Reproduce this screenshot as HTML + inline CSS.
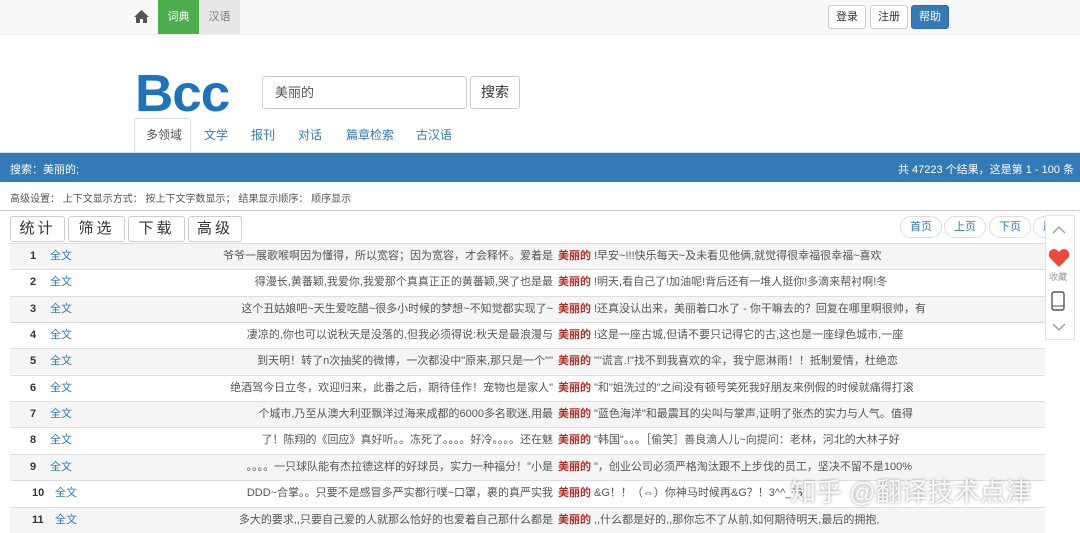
<!DOCTYPE html>
<html><head><meta charset="utf-8"><style>
*{margin:0;padding:0;box-sizing:border-box}
body{width:1080px;height:531px;overflow:hidden;background:#fff;font-family:"Liberation Sans","Noto Sans CJK SC",sans-serif;font-size:12px;color:#333;position:relative}
.a{position:absolute}
.nav{left:0;top:0;width:1080px;height:35px;background:#f8f8f8;border-bottom:1px solid #eee}
.btn{position:absolute;border:1px solid #ccc;border-radius:3px;background:#fff;text-align:center;font-size:11px}
.tab{position:absolute;top:126px;font-size:12px;color:#337ab7}
.bar{left:0;top:153px;width:1080px;height:29px;background:#337ab7;color:#fff;font-size:11px}
.row{position:absolute;left:10px;width:1035px;height:26px;border-top:1px solid #ddd;font-size:11px;line-height:25px}
.row.g{background:#f5f5f5}
.n{position:absolute;left:20px;font-weight:bold;color:#333}
.q{position:absolute;left:40px;color:#337ab7}
.l{position:absolute;right:492px;white-space:nowrap;color:#555}
.k{position:absolute;left:548px;font-weight:bold;color:#b92c28}
.r{position:absolute;left:584px;white-space:nowrap;color:#555}
.pg{position:absolute;top:216px;height:22px;border:1px solid #ddd;border-radius:11px;font-size:11px;color:#337ab7;text-align:center;line-height:20px;background:#fff}
.tb{position:absolute;top:216px;height:26px;border:1px solid #ccc;border-radius:3px;background:#fff;font-size:15px;text-align:center;line-height:24px;letter-spacing:3px;color:#333}
</style></head><body>
<div class="a nav"></div>
<svg class="a" style="left:134px;top:10px" width="15" height="13" viewBox="0 0 15 13"><path d="M7.5 0L0 7h2v6h4V9h3v4h4V7h2z" fill="#555"/></svg>
<div class="a" style="left:158px;top:0;width:41px;height:34px;background:#4cae4c;color:#fff;font-size:11px;line-height:34px;text-align:center">词典</div>
<div class="a" style="left:199px;top:0;width:41px;height:34px;background:#e7e7e7;color:#777;font-size:11px;line-height:34px;text-align:center">汉语</div>
<div class="btn" style="left:828px;top:5px;width:38px;height:24px;line-height:22px">登录</div>
<div class="btn" style="left:870px;top:5px;width:38px;height:24px;line-height:22px">注册</div>
<div class="btn" style="left:911px;top:5px;width:38px;height:24px;line-height:22px;background:#337ab7;border-color:#2e6da4;color:#fff">帮助</div>
<div class="a" style="left:135px;top:68px;font-family:'Liberation Sans',sans-serif;font-weight:bold;font-size:52px;color:#1e73be;line-height:52px;letter-spacing:-1px;transform:scaleX(1.02);transform-origin:left">Bcc</div>
<div class="a" style="left:262px;top:76px;width:205px;height:33px;border:1px solid #ccc;border-radius:3px;font-size:13px;color:#555;line-height:31px;padding-left:12px">美丽的</div>
<div class="a" style="left:470px;top:76px;width:50px;height:33px;border:1px solid #ccc;border-radius:3px;font-size:14px;line-height:31px;text-align:center">搜索</div>
<div class="a" style="left:134px;top:118px;width:57px;height:36px;border:1px solid #ddd;border-bottom:none;border-radius:3px 3px 0 0;background:#fff"></div>
<div class="tab" style="left:146px;color:#555">多领域</div>
<div class="tab" style="left:204px">文学</div>
<div class="tab" style="left:251px">报刊</div>
<div class="tab" style="left:298px">对话</div>
<div class="tab" style="left:346px">篇章检索</div>
<div class="tab" style="left:416px">古汉语</div>
<div class="a" style="left:0;top:152px;width:1080px;border-top:1px solid #ddd"></div>
<div class="a bar"><span class="a" style="left:10px;top:8px">搜索：美丽的;</span><span class="a" style="right:6px;top:8px">共 47223 个结果，这是第 1 - 100 条</span></div>
<div class="a" style="left:10px;top:190px;font-size:10px;color:#555">高级设置：&nbsp;上下文显示方式：&nbsp;按上下文字数显示；&nbsp;结果显示顺序：&nbsp;顺序显示</div>
<div class="a" style="left:0;top:210px;width:1080px;border-top:1px solid #ccc"></div>
<div class="tb" style="left:10px;width:55px">统计</div>
<div class="tb" style="left:68px;width:57px">筛选</div>
<div class="tb" style="left:128px;width:57px">下载</div>
<div class="tb" style="left:188px;width:54px">高级</div>
<div class="pg" style="left:900px;width:42px">首页</div>
<div class="pg" style="left:944px;width:42px">上页</div>
<div class="pg" style="left:989px;width:42px">下页</div>
<div class="pg" style="left:1033px;width:42px">尾页</div>

<div class="row g" style="top:243px"><span class="n">1</span><span class="q">全文</span><span class="l">爷爷一展歌喉啊因为懂得，所以宽容；因为宽容，才会释怀。爱着是</span><span class="k">美丽的</span><span class="r">!早安~!!!快乐每天~及未看见他俩,就觉得很幸福很幸福~喜欢</span></div>
<div class="row" style="top:269px"><span class="n">2</span><span class="q">全文</span><span class="l">得漫长,黄蕃颖,我爱你,我爱那个真真正正的黄蕃颖,哭了也是最</span><span class="k">美丽的</span><span class="r">!明天,看自己了!加油呢!背后还有一堆人挺你!多滴来帮衬啊!冬</span></div>
<div class="row g" style="top:296px"><span class="n">3</span><span class="q">全文</span><span class="l">这个丑姑娘吧~天生爱吃醋~很多小时候的梦想~不知觉都实现了~</span><span class="k">美丽的</span><span class="r">!还真没认出来，美丽着口水了 - 你干嘛去的？回复在哪里啊很帅，有</span></div>
<div class="row" style="top:322px"><span class="n">4</span><span class="q">全文</span><span class="l">凄凉的,你也可以说秋天是没落的,但我必须得说:秋天是最浪漫与</span><span class="k">美丽的</span><span class="r">!这是一座古城,但请不要只记得它的古,这也是一座绿色城市,一座</span></div>
<div class="row g" style="top:348px"><span class="n">5</span><span class="q">全文</span><span class="l">到天明！转了n次抽奖的微博，一次都没中"原来,那只是一个""</span><span class="k">美丽的</span><span class="r">""谎言.!"找不到我喜欢的伞，我宁愿淋雨！！抵制爱情，杜绝恋</span></div>
<div class="row" style="top:375px"><span class="n">6</span><span class="q">全文</span><span class="l">绝酒驾今日立冬，欢迎归来，此番之后，期待佳作！宠物也是家人"</span><span class="k">美丽的</span><span class="r">"和"姐洗过的"之间没有顿号笑死我好朋友来例假的时候就痛得打滚</span></div>
<div class="row g" style="top:401px"><span class="n">7</span><span class="q">全文</span><span class="l">个城市,乃至从澳大利亚飘洋过海来成都的6000多名歌迷,用最</span><span class="k">美丽的</span><span class="r">"蓝色海洋"和最震耳的尖叫与掌声,证明了张杰的实力与人气。值得</span></div>
<div class="row" style="top:427px"><span class="n">8</span><span class="q">全文</span><span class="l">了！陈翔的《回应》真好听。。冻死了。。。。好冷。。。。还在魅</span><span class="k">美丽的</span><span class="r">"韩国"。。。［偷笑］善良滴人儿~向提问：老林，河北的大林子好</span></div>
<div class="row g" style="top:454px"><span class="n">9</span><span class="q">全文</span><span class="l">。。。。一只球队能有杰拉德这样的好球员，实力一种福分！"小是</span><span class="k">美丽的</span><span class="r">"，创业公司必须严格淘汰跟不上步伐的员工，坚决不留不是100%</span></div>
<div class="row" style="top:480px"><span class="n" style="left:22px">10</span><span class="q" style="left:45px">全文</span><span class="l">DDD~合掌。。只要不是感冒多严实都行噗~口罩，裹的真严实我</span><span class="k">美丽的</span><span class="r">&amp;G！！（⇔）你神马时候再&amp;G？！3^^_^3</span></div>
<div class="row g" style="top:507px"><span class="n" style="left:22px">11</span><span class="q" style="left:45px">全文</span><span class="l">多大的要求,,只要自己爱的人就那么恰好的也爱着自己那什么都是</span><span class="k">美丽的</span><span class="r">,,什么都是好的,,那你忘不了从前,如何期待明天,最后的拥抱,</span></div>

<div class="a" style="left:1045px;top:215px;width:30px;height:125px;background:#fff;border:1px solid #e5e5e5"></div>
<svg class="a" style="left:1051px;top:225px" width="16" height="10"><path d="M2 8L8 2L14 8" stroke="#999" fill="none" stroke-width="1.3"/></svg>
<svg class="a" style="left:1048px;top:248px" width="22" height="20"><path d="M11 19L2 10C-1 6 2 1 6 1C8.5 1 10 3 11 4C12 3 13.5 1 16 1C20 1 23 6 20 10Z" fill="#e74c3c"/></svg>
<div class="a" style="left:1049px;top:270px;font-size:9px;color:#999">收藏</div>
<svg class="a" style="left:1051px;top:291px" width="14" height="20"><rect x="1" y="1" width="12" height="18" rx="2" stroke="#555" fill="none" stroke-width="1.4"/><line x1="1" y1="15" x2="13" y2="15" stroke="#555"/></svg>
<svg class="a" style="left:1051px;top:322px" width="16" height="10"><path d="M2 2L8 8L14 2" stroke="#999" fill="none" stroke-width="1.3"/></svg>
<div class="a" style="left:790px;top:472px;font-size:26px;color:rgba(255,255,255,0.92);text-shadow:0 0 3px rgba(0,0,0,0.45);white-space:nowrap">知乎 @翻译技术点津</div>
</body></html>
